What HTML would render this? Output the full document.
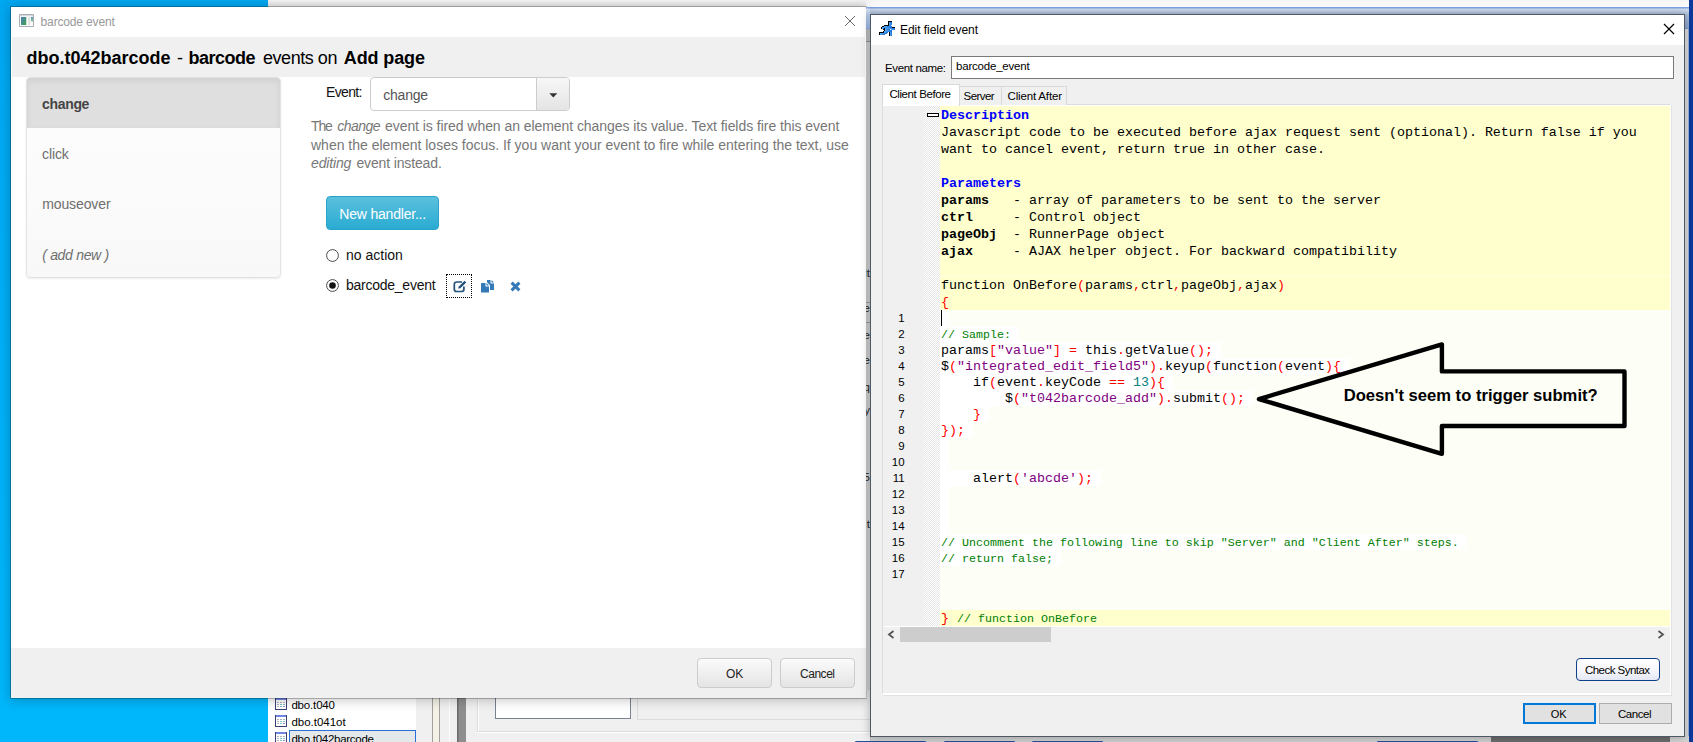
<!DOCTYPE html>
<html><head><meta charset="utf-8"><title>barcode event</title>
<style>
html,body{margin:0;padding:0}
body{width:1693px;height:742px;overflow:hidden;position:relative;background:#f0f0f0;font-family:"Liberation Sans",sans-serif;font-size:12px;color:#000}
.a{position:absolute}
.t{position:absolute;white-space:pre;line-height:1}
#desk{left:0;top:0;width:268px;height:742px;background:linear-gradient(180deg,#00a7f1 0%,#00aff6 45%,#00b7fb 100%)}
#deskr{left:1689px;top:0;width:4px;height:742px;background:#0b3a9c}
#bgtop{left:268px;top:0;width:1421px;height:8px;background:linear-gradient(#f6f6f6,#e6e6e6)}
#bgtopr{left:866px;top:0;width:823px;height:7px;background:linear-gradient(#f4f4f4,#fdfdfd)}
#bgblue{left:866px;top:7px;width:823px;height:22px;background:linear-gradient(#7ea3e3 0,#7ea3e3 1px,#d3dff0 2px,#a9bcd9 8px,#8da7cf 21px,#6f8fc4 22px)}
#bggray{left:866px;top:29px;width:823px;height:713px;background:#c2c2c2}
#dlg1{left:10px;top:6px;width:855px;height:691px;background:#fff;background-clip:padding-box;border:1px solid rgba(0,0,0,.24);border-right-color:rgba(0,0,0,.10);box-shadow:0 1px 11px rgba(0,0,0,.24)}
.btn1{position:absolute;box-sizing:border-box;height:30px;width:75px;border:1px solid #ccc;border-radius:4px;background:linear-gradient(#fbfbfb,#e4e4e4)}
#dlg2{left:870px;top:14px;width:813px;height:721px;background:#f0f0f0;border:1px solid #4f5865;box-shadow:0 0 9px rgba(0,0,0,.28)}
.ln{position:absolute;left:0;white-space:pre;font-family:"Liberation Mono",monospace;font-size:13.333px}
.ln b{font-weight:bold}
.r{color:#f00}.p{color:#800080}.g{color:#008000;font-size:11.667px}.n{color:#008080}.bl{color:#00f;font-weight:bold}
.w{background:#fff;display:inline-block}
</style></head><body>
<div class="a" id="bgtop"></div>
<div class="a" id="bgtopr"></div>
<div class="a" id="bgblue"></div>
<div class="a" id="bggray"></div>
<div class="a" id="desk"></div>
<div class="a" id="deskr"></div>
<div class="a" id="behind" style="left:268px;top:690px;width:602px;height:52px;background:#f0f0f0;overflow:hidden"><div class="a" style="left:0;top:0;width:148px;height:52px;background:#fff"></div>
<div class="a" style="left:164px;top:0;width:1px;height:52px;background:#a0a0a0"></div>
<div class="a" style="left:165px;top:0;width:6px;height:52px;background:#f4f2e6"></div>
<div class="a" style="left:171px;top:0;width:1px;height:52px;background:#a0a0a0"></div>
<div class="a" style="left:181px;top:0;width:1px;height:52px;background:#fbfbfb"></div>
<div class="a" style="left:189px;top:0;width:9px;height:52px;background:linear-gradient(90deg,#6a6a6a 0,#6a6a6a 1px,#8e8e8e 2px,#8e8e8e 100%)"></div>
<div class="a" style="left:209px;top:0;width:400px;height:41px;border-left:1px solid #dcdcdc;border-bottom:1px solid #dcdcdc;box-shadow:1px 0 0 #fff inset, 0 1px 0 #fff"></div>
<div class="a" style="left:227px;top:0;width:134px;height:28px;background:#fff;border:1px solid #7a8292;border-top:0"></div>
<div class="a" style="left:369px;top:0;width:240px;height:29px;border-left:1px solid #dcdcdc;border-bottom:1px solid #dcdcdc"></div>
<div class="a" style="left:21px;top:40px;width:125px;height:20px;background:#e4e8eb;border:1px solid #2a6fd6"></div>
<svg class="a" style="left:7px;top:8px" width="12" height="12" viewBox="0 0 12 12" shape-rendering="crispEdges"><rect width="12" height="12" fill="#3a3f7a"/><rect x="1" y="0" width="10" height="2" fill="#6f86e0"/><rect x="1" y="2" width="10" height="9" fill="#fff"/><g fill="#b0b4b8"><rect x="2" y="4" width="2" height="1"/><rect x="5" y="4" width="2" height="1"/><rect x="8" y="4" width="2" height="1"/><rect x="2" y="6" width="2" height="1"/><rect x="2" y="8" width="2" height="1"/></g><g fill="#7cc8c8"><rect x="5" y="6" width="2" height="1"/><rect x="8" y="6" width="2" height="1"/><rect x="5" y="8" width="2" height="1"/></g><rect x="8" y="8" width="2" height="1" fill="#9a8ad8"/></svg><svg class="a" style="left:7px;top:25px" width="12" height="12" viewBox="0 0 12 12" shape-rendering="crispEdges"><rect width="12" height="12" fill="#3a3f7a"/><rect x="1" y="0" width="10" height="2" fill="#6f86e0"/><rect x="1" y="2" width="10" height="9" fill="#fff"/><g fill="#b0b4b8"><rect x="2" y="4" width="2" height="1"/><rect x="5" y="4" width="2" height="1"/><rect x="8" y="4" width="2" height="1"/><rect x="2" y="6" width="2" height="1"/><rect x="2" y="8" width="2" height="1"/></g><g fill="#7cc8c8"><rect x="5" y="6" width="2" height="1"/><rect x="8" y="6" width="2" height="1"/><rect x="5" y="8" width="2" height="1"/></g><rect x="8" y="8" width="2" height="1" fill="#9a8ad8"/></svg><svg class="a" style="left:7px;top:42px" width="12" height="12" viewBox="0 0 12 12" shape-rendering="crispEdges"><rect width="12" height="12" fill="#3a3f7a"/><rect x="1" y="0" width="10" height="2" fill="#6f86e0"/><rect x="1" y="2" width="10" height="9" fill="#fff"/><g fill="#b0b4b8"><rect x="2" y="4" width="2" height="1"/><rect x="5" y="4" width="2" height="1"/><rect x="8" y="4" width="2" height="1"/><rect x="2" y="6" width="2" height="1"/><rect x="2" y="8" width="2" height="1"/></g><g fill="#7cc8c8"><rect x="5" y="6" width="2" height="1"/><rect x="8" y="6" width="2" height="1"/><rect x="5" y="8" width="2" height="1"/></g><rect x="8" y="8" width="2" height="1" fill="#9a8ad8"/></svg><span class="t" style='left:23.40px;top:9.73px;font-size:11.5px;letter-spacing:-0.167px;'>dbo.t040</span><span class="t" style='left:23.40px;top:26.73px;font-size:11.5px;letter-spacing:-0.018px;'>dbo.t041ot</span><span class="t" style='left:23.40px;top:43.73px;font-size:11.5px;letter-spacing:-0.266px;'>dbo.t042barcode</span></div><div class="a" style="left:871px;top:736px;width:620px;height:6px;background:#cfcfcf"></div><div class="a" style="left:1491px;top:736px;width:179px;height:6px;background:#6c6c6c"></div><div class="a" style="left:1670px;top:736px;width:19px;height:6px;background:#d4d4d4"></div><div class="a" style="left:854px;top:741px;width:73px;height:3px;box-sizing:border-box;background:#e8e8e8;border:1px solid #1f4f9c;border-radius:3px 3px 0 0"></div><div class="a" style="left:943px;top:741px;width:73px;height:3px;box-sizing:border-box;background:#e8e8e8;border:1px solid #1f4f9c;border-radius:3px 3px 0 0"></div><div class="a" style="left:1031px;top:741px;width:73px;height:3px;box-sizing:border-box;background:#e8e8e8;border:1px solid #1f4f9c;border-radius:3px 3px 0 0"></div><div class="a" style="left:1376px;top:741px;width:103px;height:3px;box-sizing:border-box;background:#e8e8e8;border:1px solid #1f4f9c;border-radius:3px 3px 0 0"></div><div class="a" id="dlg1"><svg class="a" style="left:8px;top:7px" width="15" height="13" viewBox="0 0 15 13"><defs><linearGradient id="gg" x1="0" y1="0" x2="1" y2="1"><stop offset="0" stop-color="#4f7fc0"/><stop offset="1" stop-color="#3ea04a"/></linearGradient><linearGradient id="gh" x1="0" y1="0" x2="0" y2="1"><stop offset="0" stop-color="#5a8fd0"/><stop offset="1" stop-color="#8fd080"/></linearGradient></defs><rect x=".5" y=".5" width="14" height="12" rx=".8" fill="#fff" stroke="#a9adb6" stroke-width="1.1"/><rect x="1" y="1" width="13" height="1.3" fill="#d5d8dd"/><rect x="2" y="3" width="5.3" height="8" fill="url(#gg)"/><rect x="9" y="3" width="2.4" height="8" fill="#e2e2e2"/><rect x="12" y="3" width="2" height="4.6" fill="url(#gh)"/></svg><span class="t" style='left:29.60px;top:9.00px;font-size:12px;color:#999;letter-spacing:-0.155px;'>barcode event</span><svg class="a" style="left:833px;top:8px" width="12" height="12" viewBox="0 0 12 12"><path d="M1 1L11 11M11 1L1 11" stroke="#6a6a6a" stroke-width="1" fill="none"/></svg><div class="a" style="left:1px;top:30px;width:853px;height:40px;background:#f0f0f0"></div><span class="t" style='left:15.50px;top:41.70px;font-size:18px;font-weight:bold;letter-spacing:-0.010px;'>dbo.t042barcode</span><span class="t" style='left:166.00px;top:41.70px;font-size:18px;'>-</span><span class="t" style='left:177.50px;top:41.70px;font-size:18px;font-weight:bold;letter-spacing:-0.522px;'>barcode</span><span class="t" style='left:252.00px;top:41.70px;font-size:18px;letter-spacing:-0.458px;'>events on</span><span class="t" style='left:332.80px;top:41.70px;font-size:18px;font-weight:bold;letter-spacing:-0.117px;'>Add page</span><div class="a" style="left:15px;top:70px;width:253px;height:199px;border:1px solid #e3e3e3;border-radius:4px;background:linear-gradient(#fefefe,#f8f8f8);box-shadow:0 1px 2px rgba(0,0,0,.08);overflow:hidden"><div class="a" style="left:0;top:0;width:253px;height:50px;background:#dfdfdf;box-shadow:inset 0 3px 6px rgba(0,0,0,.07)"></div></div><span class="t" style='left:31.00px;top:90.10px;font-size:14px;color:#444;font-weight:bold;letter-spacing:-0.323px;'>change</span><span class="t" style='left:31.00px;top:140.40px;font-size:14px;color:#6e6e6e;letter-spacing:-0.109px;'>click</span><span class="t" style='left:31.20px;top:190.30px;font-size:14px;color:#6e6e6e;letter-spacing:-0.108px;'>mouseover</span><span class="t" style='left:31.20px;top:240.80px;font-size:14px;color:#6e6e6e;font-style:italic;letter-spacing:-0.305px;'>( add new )</span><span class="t" style='left:315.00px;top:78.10px;font-size:14px;color:#111;letter-spacing:-0.661px;'>Event:</span><div class="a" style="left:359px;top:70px;width:198px;height:32px;border:1px solid #ccc;border-radius:4px;background:#fff;overflow:hidden"><div class="a" style="left:165px;top:0;width:33px;height:32px;border-left:1px solid #ccc;background:linear-gradient(#f7f7f7,#e4e4e4)"></div><svg class="a" style="left:178px;top:15px" width="9" height="5" viewBox="0 0 9 5"><path d="M0.3 0.3H8.3L4.3 4.5Z" fill="#333"/></svg></div><span class="t" style='left:372.30px;top:81.10px;font-size:14px;color:#555;letter-spacing:-0.248px;'>change</span><span class="t" style='left:300.00px;top:111.90px;font-size:14px;color:#777;letter-spacing:-1.162px;'>The</span><span class="t" style='left:326.20px;top:111.90px;font-size:14px;color:#777;font-style:italic;letter-spacing:-0.507px;'>change</span><span class="t" style='left:374.00px;top:111.90px;font-size:14px;color:#777;letter-spacing:-0.060px;'>event is fired when an element changes its value. Text fields fire this event</span><span class="t" style='left:300.00px;top:130.50px;font-size:14px;color:#777;letter-spacing:-0.008px;'>when the element loses focus. If you want your event to fire while entering the text, use</span><span class="t" style='left:300.00px;top:148.70px;font-size:14px;color:#777;font-style:italic;letter-spacing:-0.144px;'>editing</span><span class="t" style='left:345.40px;top:148.70px;font-size:14px;color:#777;letter-spacing:-0.136px;'>event instead.</span><div class="a" style="left:315px;top:189px;width:113px;height:34px;box-sizing:border-box;border:1px solid #28a4c9;border-radius:4px;background:linear-gradient(#5bc0de,#2aabd2)"></div><span class="t" style='left:328.30px;top:199.70px;font-size:14px;color:#fff;letter-spacing:-0.200px;'>New handler...</span><svg class="a" style="left:315px;top:242px" width="13" height="13" viewBox="0 0 13 13"><circle cx="6.5" cy="6.5" r="5.9" fill="#fff" stroke="#4a4a4a" stroke-width="1"/></svg><svg class="a" style="left:315px;top:272px" width="13" height="13" viewBox="0 0 13 13"><circle cx="6.5" cy="6.5" r="5.9" fill="#fff" stroke="#4a4a4a" stroke-width="1"/><circle cx="6.5" cy="6.5" r="3.3" fill="#111"/></svg><span class="t" style='left:335.00px;top:241.10px;font-size:14px;color:#111;'>no action</span><span class="t" style='left:335.00px;top:271.10px;font-size:14px;color:#111;letter-spacing:-0.253px;'>barcode_event</span><div class="a" style="left:435px;top:267px;width:24px;height:22px;border:1px dotted #000"></div><svg class="a" style="left:442px;top:273px" width="14" height="13" viewBox="0 0 14 13"><path d="M9 2H3.6A2.3 2.3 0 0 0 1.3 4.3V9.2A2.3 2.3 0 0 0 3.6 11.5H8.6A2.3 2.3 0 0 0 10.9 9.2V6.5" fill="none" stroke="#23527c" stroke-width="1.7"/><path d="M5.2 8.6L5.8 6.6L11.6 0.8L13.2 2.4L7.4 8.2Z" fill="#23527c"/></svg><svg class="a" style="left:470px;top:273px" width="14" height="13" viewBox="0 0 14 13"><path d="M0 3H4.5V6.5H8V12.5H0Z M5.5 3L8 5.5H5.5Z" fill="#337ab7"/><path d="M6 0H9.5V3.5H13V10H9V5.2L6 2.2Z M10.5 0L13 2.5H10.5Z" fill="#337ab7"/></svg><svg class="a" style="left:499px;top:274px" width="11" height="11" viewBox="0 0 11 11"><path d="M1.6 1.6L9.4 9.4M9.4 1.6L1.6 9.4" stroke="#337ab7" stroke-width="3" stroke-linecap="butt" fill="none"/></svg><div class="a" style="left:0;top:641px;width:855px;height:50px;background:#f0f0f0"></div><div class="btn1" style="left:686px;top:651px"></div><div class="btn1" style="left:769px;top:651px"></div><span class="t" style='left:715.00px;top:661.00px;font-size:12px;color:#222;'>OK</span><span class="t" style='left:789.00px;top:660.80px;font-size:12px;color:#222;letter-spacing:-0.472px;'>Cancel</span></div><div class="a" id="dlg2"><div class="a" style="left:0;top:0;width:813px;height:30px;background:#fff"></div><svg class="a" style="left:8px;top:6px" width="16" height="15" viewBox="0 0 16 15" shape-rendering="crispEdges"><defs><linearGradient id="rb" x1="0" y1="0" x2="1" y2="0"><stop offset="0" stop-color="#4fa8f6"/><stop offset="1" stop-color="#1f6fd2"/></linearGradient></defs><rect x="9" y="0" width="4" height="1" fill="#000"/><rect x="9" y="1" width="1" height="1" fill="#000"/><rect x="10" y="1" width="3" height="1" fill="url(#rb)"/><rect x="9" y="2" width="1" height="1" fill="#000"/><rect x="10" y="2" width="3" height="1" fill="url(#rb)"/><rect x="9" y="3" width="1" height="1" fill="#000"/><rect x="10" y="3" width="3" height="1" fill="url(#rb)"/><rect x="5" y="4" width="5" height="1" fill="#000"/><rect x="10" y="4" width="2" height="1" fill="url(#rb)"/><rect x="3" y="5" width="2" height="1" fill="#000"/><rect x="5" y="5" width="8" height="1" fill="url(#rb)"/><rect x="2" y="6" width="1" height="1" fill="#000"/><rect x="3" y="6" width="10" height="1" fill="url(#rb)"/><rect x="13" y="6" width="3" height="1" fill="#000"/><rect x="2" y="7" width="1" height="1" fill="#000"/><rect x="3" y="7" width="2" height="1" fill="url(#rb)"/><rect x="5" y="7" width="1" height="1" fill="#000"/><rect x="6" y="7" width="10" height="1" fill="url(#rb)"/><rect x="4" y="8" width="2" height="1" fill="#000"/><rect x="6" y="8" width="5" height="1" fill="url(#rb)"/><rect x="12" y="8" width="4" height="1" fill="url(#rb)"/><rect x="5" y="9" width="1" height="1" fill="#000"/><rect x="6" y="9" width="7" height="1" fill="url(#rb)"/><rect x="4" y="10" width="1" height="1" fill="#000"/><rect x="5" y="10" width="8" height="1" fill="url(#rb)"/><rect x="0" y="11" width="5" height="1" fill="#000"/><rect x="5" y="11" width="4" height="1" fill="url(#rb)"/><rect x="10" y="11" width="1" height="1" fill="#000"/><rect x="11" y="11" width="2" height="1" fill="url(#rb)"/><rect x="0" y="12" width="1" height="1" fill="#000"/><rect x="1" y="12" width="7" height="1" fill="url(#rb)"/><rect x="10" y="12" width="1" height="1" fill="#000"/><rect x="11" y="12" width="2" height="1" fill="url(#rb)"/><rect x="0" y="13" width="1" height="1" fill="#000"/><rect x="1" y="13" width="5" height="1" fill="url(#rb)"/><rect x="10" y="13" width="1" height="1" fill="#000"/><rect x="11" y="13" width="2" height="1" fill="url(#rb)"/><rect x="10" y="14" width="1" height="1" fill="#000"/><rect x="11" y="14" width="2" height="1" fill="url(#rb)"/></svg><span class="t" style='left:29.00px;top:8.80px;font-size:12px;letter-spacing:-0.048px;'>Edit field event</span><svg class="a" style="left:792px;top:8px" width="12" height="12" viewBox="0 0 12 12"><path d="M1 1L11 11M11 1L1 11" stroke="#000" stroke-width="1.2" fill="none"/></svg><span class="t" style='left:14.00px;top:47.63px;font-size:11.5px;letter-spacing:-0.358px;'>Event name:</span><div class="a" style="left:80px;top:41px;width:721px;height:21px;border:1px solid #7a7a7a;background:#fff"></div><span class="t" style='left:85.00px;top:45.73px;font-size:11.5px;letter-spacing:-0.199px;'>barcode_event</span><div class="a" style="left:11px;top:89px;width:787px;height:588px;border:1px solid #dcdcdc;border-right-color:#fff;border-bottom:2px solid #fff;box-shadow:0 1px 0 #fff inset,1px 1px 0 #e2e2e2"></div><div class="a" style="left:89px;top:71px;width:41px;height:18px;border:1px solid #d9d9d9;border-bottom:0;border-left:0;background:#f0f0f0"></div><div class="a" style="left:131px;top:71px;width:64px;height:18px;border:1px solid #d9d9d9;border-bottom:0;border-left:0;background:#f0f0f0"></div><div class="a" style="left:11px;top:69px;width:76px;height:22px;border:1px solid #d9d9d9;border-bottom:0;background:#fff"></div><span class="t" style='left:18.40px;top:74.22px;font-size:11.5px;letter-spacing:-0.407px;'>Client Before</span><span class="t" style='left:92.50px;top:75.82px;font-size:11.5px;letter-spacing:-0.535px;'>Server</span><span class="t" style='left:136.50px;top:75.82px;font-size:11.5px;letter-spacing:-0.159px;'>Client After</span><div class="a" id="ed" style="left:12px;top:91px;width:787px;height:520px;background:#fdfef5;overflow:hidden"><div class="a" style="left:0;top:0;width:41px;height:520px;background:#f0f0f0"></div><div class="a" style="left:41px;top:0;width:16px;height:520px;background-color:#fff;background-image:linear-gradient(45deg,#e6e6e6 25%,transparent 25%,transparent 75%,#e6e6e6 75%),linear-gradient(45deg,#e6e6e6 25%,transparent 25%,transparent 75%,#e6e6e6 75%);background-size:2px 2px;background-position:0 0,1px 1px"></div><div class="a" style="left:57px;top:0;width:730px;height:204px;background:#ffffce"></div><div class="a" style="left:41px;top:170px;width:746px;height:1px;background:rgba(255,255,255,.45)"></div><div class="a" style="left:57px;top:504px;width:730px;height:16px;background:#ffffce"></div><div class="a" style="left:44px;top:7px;width:10px;height:2px;border:1px solid #000;background:#fff"></div><div class="ln" style="left:58px;top:1px;line-height:17px;height:17px"><span class="bl">Description</span></div><div class="ln" style="left:58px;top:18px;line-height:17px;height:17px">Javascript code to be executed before ajax request sent (optional). Return false if you</div><div class="ln" style="left:58px;top:35px;line-height:17px;height:17px">want to cancel event, return true in other case.</div><div class="ln" style="left:58px;top:69px;line-height:17px;height:17px"><span class="bl">Parameters</span></div><div class="ln" style="left:58px;top:86px;line-height:17px;height:17px"><b>params</b>   - array of parameters to be sent to the server</div><div class="ln" style="left:58px;top:103px;line-height:17px;height:17px"><b>ctrl</b>     - Control object</div><div class="ln" style="left:58px;top:120px;line-height:17px;height:17px"><b>pageObj</b>  - RunnerPage object</div><div class="ln" style="left:58px;top:137px;line-height:17px;height:17px"><b>ajax</b>     - AJAX helper object. For backward compatibility</div><div class="ln" style="left:58px;top:171px;line-height:17px;height:17px">function OnBefore<span class="r">(</span>params<span class="r">,</span>ctrl<span class="r">,</span>pageObj<span class="r">,</span>ajax<span class="r">)</span></div><div class="ln" style="left:58px;top:188px;line-height:17px;height:17px"><span class="r">{</span></div><div class="a" style="left:57px;top:204px;width:9px;height:16px;background:#fff"></div><div class="a" style="left:57px;top:220px;width:79px;height:16px;background:#fff"></div><div class="ln" style="left:58px;top:221px;line-height:16px;height:16px"><span class="g">// Sample:</span></div><div class="a" style="left:57px;top:236px;width:281px;height:16px;background:#fff"></div><div class="ln" style="left:58px;top:237px;line-height:16px;height:16px">params<span class="r">[</span><span class="p">"value"</span><span class="r">]</span> <span class="r">=</span> this<span class="r">.</span>getValue<span class="r">();</span></div><div class="a" style="left:57px;top:252px;width:409px;height:16px;background:#fff"></div><div class="ln" style="left:58px;top:253px;line-height:16px;height:16px">$<span class="r">(</span><span class="p">"integrated_edit_field5"</span><span class="r">).</span>keyup<span class="r">(</span>function<span class="r">(</span>event<span class="r">){</span></div><div class="a" style="left:57px;top:268px;width:233px;height:16px;background:#fff"></div><div class="ln" style="left:58px;top:269px;line-height:16px;height:16px">    if<span class="r">(</span>event<span class="r">.</span>keyCode <span class="r">==</span> <span class="n">13</span><span class="r">){</span></div><div class="a" style="left:57px;top:284px;width:313px;height:16px;background:#fff"></div><div class="ln" style="left:58px;top:285px;line-height:16px;height:16px">        $<span class="r">(</span><span class="p">"t042barcode_add"</span><span class="r">).</span>submit<span class="r">();</span></div><div class="a" style="left:57px;top:300px;width:49px;height:16px;background:#fff"></div><div class="ln" style="left:58px;top:301px;line-height:16px;height:16px">    <span class="r">}</span></div><div class="a" style="left:57px;top:316px;width:33px;height:16px;background:#fff"></div><div class="ln" style="left:58px;top:317px;line-height:16px;height:16px"><span class="r">});</span></div><div class="a" style="left:57px;top:332px;width:9px;height:16px;background:#fff"></div><div class="a" style="left:57px;top:348px;width:9px;height:16px;background:#fff"></div><div class="a" style="left:57px;top:364px;width:161px;height:16px;background:#fff"></div><div class="ln" style="left:58px;top:365px;line-height:16px;height:16px">    alert<span class="r">(</span><span class="p">'abcde'</span><span class="r">);</span></div><div class="a" style="left:57px;top:380px;width:9px;height:16px;background:#fff"></div><div class="a" style="left:57px;top:396px;width:9px;height:16px;background:#fff"></div><div class="a" style="left:57px;top:412px;width:9px;height:16px;background:#fff"></div><div class="a" style="left:57px;top:428px;width:527px;height:16px;background:#fff"></div><div class="ln" style="left:58px;top:429px;line-height:16px;height:16px"><span class="g">// Uncomment the following line to skip "Server" and "Client After" steps.</span></div><div class="a" style="left:57px;top:444px;width:121px;height:16px;background:#fff"></div><div class="ln" style="left:58px;top:445px;line-height:16px;height:16px"><span class="g">// return false;</span></div><div class="ln" style="left:58px;top:505px;line-height:16px;height:16px"><span class="r">}</span> <span class="g">// function OnBefore</span></div><div class="a" style="left:58px;top:204px;width:1.3px;height:16px;background:#000"></div><div class="a" style="left:0;top:204px;width:21.6px;height:16px;line-height:16px;text-align:right;font-size:11.5px">1</div><div class="a" style="left:0;top:220px;width:21.6px;height:16px;line-height:16px;text-align:right;font-size:11.5px">2</div><div class="a" style="left:0;top:236px;width:21.6px;height:16px;line-height:16px;text-align:right;font-size:11.5px">3</div><div class="a" style="left:0;top:252px;width:21.6px;height:16px;line-height:16px;text-align:right;font-size:11.5px">4</div><div class="a" style="left:0;top:268px;width:21.6px;height:16px;line-height:16px;text-align:right;font-size:11.5px">5</div><div class="a" style="left:0;top:284px;width:21.6px;height:16px;line-height:16px;text-align:right;font-size:11.5px">6</div><div class="a" style="left:0;top:300px;width:21.6px;height:16px;line-height:16px;text-align:right;font-size:11.5px">7</div><div class="a" style="left:0;top:316px;width:21.6px;height:16px;line-height:16px;text-align:right;font-size:11.5px">8</div><div class="a" style="left:0;top:332px;width:21.6px;height:16px;line-height:16px;text-align:right;font-size:11.5px">9</div><div class="a" style="left:0;top:348px;width:21.6px;height:16px;line-height:16px;text-align:right;font-size:11.5px">10</div><div class="a" style="left:0;top:364px;width:21.6px;height:16px;line-height:16px;text-align:right;font-size:11.5px">11</div><div class="a" style="left:0;top:380px;width:21.6px;height:16px;line-height:16px;text-align:right;font-size:11.5px">12</div><div class="a" style="left:0;top:396px;width:21.6px;height:16px;line-height:16px;text-align:right;font-size:11.5px">13</div><div class="a" style="left:0;top:412px;width:21.6px;height:16px;line-height:16px;text-align:right;font-size:11.5px">14</div><div class="a" style="left:0;top:428px;width:21.6px;height:16px;line-height:16px;text-align:right;font-size:11.5px">15</div><div class="a" style="left:0;top:444px;width:21.6px;height:16px;line-height:16px;text-align:right;font-size:11.5px">16</div><div class="a" style="left:0;top:460px;width:21.6px;height:16px;line-height:16px;text-align:right;font-size:11.5px">17</div></div><div class="a" style="left:12px;top:611px;width:787px;height:1px;background:#fff"></div><div class="a" style="left:29px;top:612px;width:151px;height:15px;background:#cdcdcd"></div><svg class="a" style="left:16px;top:615px" width="8" height="9" viewBox="0 0 8 9"><path d="M6.5 1L2 4.5L6.5 8" stroke="#555" stroke-width="1.8" fill="none"/></svg><svg class="a" style="left:786px;top:615px" width="8" height="9" viewBox="0 0 8 9"><path d="M1.5 1L6 4.5L1.5 8" stroke="#555" stroke-width="1.8" fill="none"/></svg><div class="a" style="left:705px;top:643px;width:84px;height:23px;box-sizing:border-box;border:1px solid #10408a;border-radius:4px;background:linear-gradient(#fff,#f4f5fb 60%,#e4e7f4)"></div><span class="t" style='left:714.00px;top:649.73px;font-size:11.5px;letter-spacing:-0.541px;'>Check Syntax</span><div class="a" style="left:652px;top:688px;width:73px;height:21px;box-sizing:border-box;border:2px solid #0078d7;background:#e1e1e1"></div><div class="a" style="left:728px;top:688px;width:73px;height:21px;box-sizing:border-box;border:1px solid #adadad;background:#e1e1e1"></div><span class="t" style='left:679.80px;top:693.65px;font-size:11px;'>OK</span><span class="t" style='left:747.00px;top:693.62px;font-size:11.5px;letter-spacing:-0.463px;'>Cancel</span><svg class="a" style="left:369px;top:315px" width="400" height="140" viewBox="1240 330 400 140"><path d="M1258.9 399.1L1441.9 344.4V371.4H1624.5V426H1441.9V453.8Z" fill="none" stroke="#000" stroke-width="4.4" stroke-linejoin="round"/><text x="1343.7" y="400.6" font-family="Liberation Sans, sans-serif" font-weight="bold" font-size="16.2" textLength="254" lengthAdjust="spacingAndGlyphs" fill="#000">Doesn&#39;t seem to trigger submit?</text></svg></div><div class="a" style="left:866px;top:7px;width:4px;height:22px;background:linear-gradient(#7ea3e3 0,#7ea3e3 1px,#d3dff0 2px,#a9bcd9 8px,#8da7cf 21px,#6f8fc4 22px)"></div><div class="a" style="left:866px;top:29px;width:4px;height:661px;background:#b6b6b6;overflow:hidden;font-size:11.5px"><div class="a" style="left:0;top:0;width:4px;height:12px;background:#a8a8a8"></div><div class="a" style="left:0;top:12px;width:4px;height:1px;background:#808080"></div><div class="a" style="left:0;top:273px;width:4px;height:1px;background:#8a8a8a"></div><div class="a" style="left:0;top:293px;width:4px;height:1px;background:#8a8a8a"></div><span class="t" style="right:0;top:239px;color:#222">lt</span><span class="t" style="right:0;top:274px;color:#222">ce</span><span class="t" style="right:0;top:301px;color:#222">e</span><span class="t" style="right:0;top:326px;color:#222">se</span><span class="t" style="right:0;top:353px;color:#222">q</span><span class="t" style="right:0;top:376px;color:#222">ey</span><span class="t" style="right:0;top:443px;color:#222">5</span><span class="t" style="right:0;top:490px;color:#222">t</span></div><div class="a" style="left:1685px;top:29px;width:4px;height:707px;background:linear-gradient(90deg,#c4c4c4 0,#c8c8c8 3px,#8aa4d4 3px,#8aa4d4 4px)"></div>
</body></html>
